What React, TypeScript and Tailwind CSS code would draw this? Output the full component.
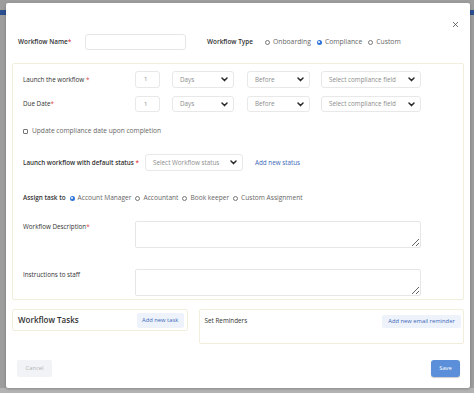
import { X } from "lucide-react";

function Chevron() {
  return (
    <svg width="7" height="5" viewBox="0 0 7 5" fill="none">
      <polyline points="1,1 3.5,3.6 6,1" stroke="#2b2b2b" strokeWidth="1.5" strokeLinecap="round" strokeLinejoin="round" />
    </svg>
  );
}

function Select({ label, className }: { label: string; className: string }) {
  return (
    <div
      className={
        "flex items-center justify-between rounded-[3px] border border-[#e8e8e8] bg-white pl-[7px] pr-[5px] text-[6.3px] text-[#8d8d8d] " +
        className
      }
    >
      <span>{label}</span>
      <Chevron />
    </div>
  );
}

function Radio({ checked, label }: { checked?: boolean; label: string }) {
  return (
    <span className="flex items-center gap-[3px]">
      {checked ? (
        <span className="flex h-[5px] w-[5px] items-center justify-center rounded-full bg-[#2f74d8]">
          <span className="h-[2px] w-[2px] rounded-full bg-white" />
        </span>
      ) : (
        <span className="h-[5px] w-[5px] rounded-full border-[0.6px] border-[#777] bg-white" />
      )}
      <span>{label}</span>
    </span>
  );
}

function NumberBox() {
  return (
    <div className="flex h-full w-[25px] items-center rounded-[3px] border border-[#e8e8e8] pl-[8px] text-[6px] text-[#8d8d8d]">
      1
    </div>
  );
}

export default function App() {
  return (
    <div className="relative h-[393px] w-[474px] overflow-hidden bg-[#9d9d9d] font-['Open_Sans',sans-serif]">
      {/* page behind the overlay */}
      <div className="mt-[10px] h-[5px] w-full bg-[#2a4f8f]" />
      <div className="absolute bottom-0 left-0 h-[5px] w-full bg-[#b4b4b4]" />

      <div className="absolute left-[6px] top-[3px] h-[385px] w-[464px] rounded-[2px] bg-white px-[6px] pt-[31px] shadow-[0_1px_3px_rgba(0,0,0,0.25)]">
        <X className="absolute right-[10px] top-[17px] h-[9px] w-[9px] text-[#444]" strokeWidth={2} />

        {/* top row */}
        <div className="flex h-[16px] items-center whitespace-nowrap text-[6.4px]">
          <div className="w-[73px] pl-[6px] font-semibold text-[#333]">
            Workflow Name<span className="text-[#e24b4b]">*</span>
          </div>
          <div className="h-full w-[101px] rounded-[3px] border border-[#e6e6e6]" />
          <div className="ml-[21px] font-semibold text-[#333]">Workflow Type</div>
          <div className="ml-[12px] flex items-center gap-[6px] text-[6.8px] text-[#666]">
            <Radio label="Onboarding" />
            <Radio checked label="Compliance" />
            <Radio label="Custom" />
          </div>
        </div>

        {/* main panel */}
        <div className="mt-[13px] whitespace-nowrap rounded-[2px] border border-[#f1eedb] px-[10px] pb-[3px] pt-[7px] text-[6.3px] text-[#333]">
          <div className="flex h-[17px] items-center">
            <div className="w-[112px] font-medium">
              Launch the workflow <span className="text-[#e24b4b]">*</span>
            </div>
            <NumberBox />
            <Select label="Days" className="ml-[12px] h-full w-[62px]" />
            <Select label="Before" className="ml-[13px] h-full w-[63px]" />
            <Select label="Select compliance field" className="ml-[11px] h-full w-[100px]" />
          </div>
          <div className="mt-[8px] flex h-[16px] items-center">
            <div className="w-[112px] font-medium">
              Due Date<span className="text-[#e24b4b]">*</span>
            </div>
            <NumberBox />
            <Select label="Days" className="ml-[12px] h-full w-[62px]" />
            <Select label="Before" className="ml-[13px] h-full w-[63px]" />
            <Select label="Select compliance field" className="ml-[11px] h-full w-[100px]" />
          </div>
          <div className="mt-[15px] flex h-[8px] items-center gap-[4px] text-[6.6px] text-[#666]">
            <span className="h-[5px] w-[5px] rounded-[1px] border-[0.6px] border-[#777]" />
            <span>Update compliance date upon completion</span>
          </div>
          <div className="mt-[19px] flex h-[17px] items-center">
            <div className="w-[122px] font-semibold">
              Launch workflow with default status <span className="text-[#e24b4b]">*</span>
            </div>
            <Select label="Select Workflow status" className="h-full w-[98px]" />
            <span className="ml-[12px] text-[#3a66b8]">Add new status</span>
          </div>
          <div className="mt-[23px] flex h-[8px] items-center gap-[4px] text-[6.6px] text-[#666]">
            <span className="text-[6.4px] font-semibold text-[#333]">Assign task to</span>
            <Radio checked label="Account Manager" />
            <Radio label="Accountant" />
            <Radio label="Book keeper" />
            <Radio label="Custom Assignment" />
          </div>
          <div className="mt-[19px] flex">
            <div className="w-[112px] pt-[1px] font-medium">
              Workflow Description<span className="text-[#e24b4b]">*</span>
            </div>
            <textarea className="h-[27px] w-[286px] rounded-[2px] border border-[#e6e6e6]" />
          </div>
          <div className="mt-[21px] flex">
            <div className="w-[112px] pt-[1px] font-medium">Instructions to staff</div>
            <textarea className="h-[27px] w-[286px] rounded-[2px] border border-[#e6e6e6]" />
          </div>
        </div>

        {/* tasks and reminders */}
        <div className="mt-[9px] flex items-start gap-[11px] whitespace-nowrap">
          <div className="flex h-[22px] w-[176px] items-center justify-between rounded-[2px] border border-[#f1eedb] pl-[5px] pr-[3px]">
            <span className="text-[8px] font-semibold text-[#333]">Workflow Tasks</span>
            <span className="flex h-[15px] w-[47px] items-center justify-center rounded-[2px] bg-[#eef3fb] text-[5.8px] text-[#3a66b8]">
              Add new task
            </span>
          </div>
          <div className="flex h-[35px] w-[266px] items-start justify-between rounded-[2px] border border-[#f1eedb] pl-[5px] pr-[2px] pt-[5px]">
            <span className="mt-[1px] text-[6.3px] font-medium text-[#333]">Set Reminders</span>
            <span className="flex h-[13px] w-[79px] items-center justify-center rounded-[2px] bg-[#eef3fb] text-[5.8px] text-[#3a66b8]">
              Add new email reminder
            </span>
          </div>
        </div>

        {/* footer */}
        <div className="absolute bottom-[11px] left-[11px] right-[10px] flex items-center justify-between">
          <span className="flex h-[17px] w-[35px] items-center justify-center rounded-[2px] bg-[#f1f3f6] text-[5.8px] text-[#b3b3b3]">
            Cancel
          </span>
          <span className="flex h-[17px] w-[29px] items-center justify-center rounded-[3px] bg-[#5b8fd9] text-[5.8px] text-white shadow-[0_1px_1px_rgba(0,0,0,0.2)]">
            Save
          </span>
        </div>
      </div>
    </div>
  );
}
